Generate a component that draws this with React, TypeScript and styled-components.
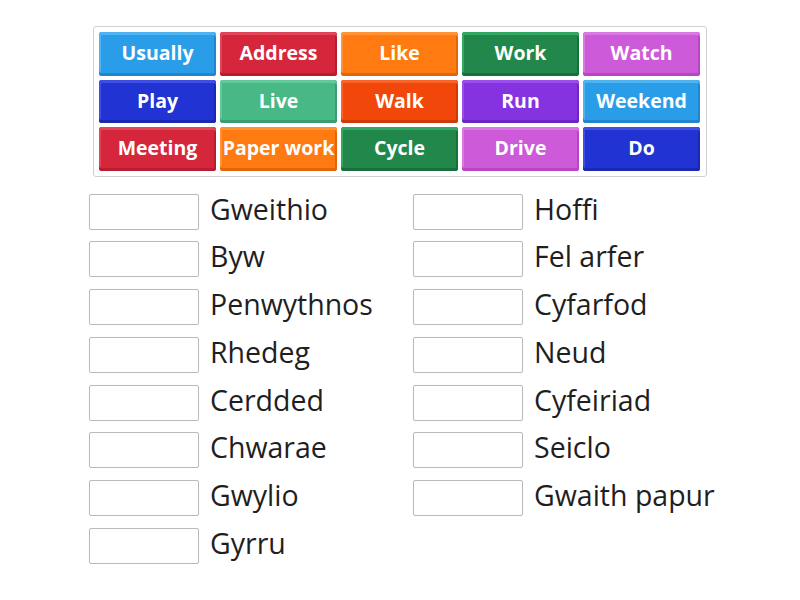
import React from "react";
import styled, { createGlobalStyle } from "styled-components";

const GlobalStyle = createGlobalStyle`
  html, body {
    margin: 0;
    padding: 0;
    background: #fff;
    font-family: "Open Sans", "Liberation Sans", sans-serif;
  }
`;

const Page = styled.div`
  width: 800px;
  height: 600px;
  padding-top: 26px;
  box-sizing: border-box;
`;

const Tray = styled.div`
  width: 614px;
  margin: 0 auto;
  box-sizing: border-box;
  border: 1px solid #cfcfcf;
  border-radius: 3px;
  padding: 5px 6px 5px 5px;
  display: grid;
  grid-template-columns: repeat(5, 117px);
  grid-auto-rows: 43.5px;
  column-gap: 4px;
  row-gap: 4px;
`;

const Tile = styled.div<{ $c: string; $light: string; $dark: string }>`
  border-radius: 3px;
  background: ${(p) => p.$c};
  box-shadow: inset 0 3px 0 ${(p) => p.$light}, inset 0 -3px 0 ${(p) => p.$dark},
    inset 2px 0 0 ${(p) => p.$light}, inset -2px 0 0 ${(p) => p.$dark};
  color: #fff;
  font-weight: 700;
  font-size: 19.5px;
  padding-bottom: 2px;
  box-sizing: border-box;
  display: flex;
  align-items: center;
  justify-content: center;
  white-space: nowrap;
`;

const Lists = styled.div`
  display: flex;
  padding-left: 89px;
  margin-top: 17px;
`;

const Column = styled.div`
  width: 324px;
  display: flex;
  flex-direction: column;
  gap: 11.8px;
`;

const Row = styled.div`
  display: flex;
  align-items: center;
  gap: 11px;
  height: 36px;
`;

const Box = styled.div`
  width: 108px;
  height: 34px;
  border: 1px solid #b9b9b9;
  border-radius: 2px;
  background: #fff;
  flex-shrink: 0;
`;

const Word = styled.span`
  font-size: 28.5px;
  color: #1f1f1f;
  line-height: 36px;
  margin-top: -6px;
  white-space: nowrap;
`;

type C = [string, string, string];
const blue: C = ["#2a9de9", "#4fb3f2", "#1f86cf"];
const red: C = ["#d5263b", "#e14658", "#b71d30"];
const orange: C = ["#ff7a10", "#ff9335", "#e2650a"];
const green: C = ["#21874b", "#33a862", "#196f3c"];
const pink: C = ["#cd5bd9", "#da79e3", "#b746c4"];
const navy: C = ["#2233d3", "#3f4fe3", "#1a28b2"];
const mint: C = ["#48b886", "#62c99a", "#389d70"];
const flame: C = ["#f2470a", "#fb6428", "#cf3a06"];
const purple: C = ["#8532e0", "#9a4eec", "#6f24c4"];

const tiles: [string, C][] = [
  ["Usually", blue],
  ["Address", red],
  ["Like", orange],
  ["Work", green],
  ["Watch", pink],
  ["Play", navy],
  ["Live", mint],
  ["Walk", flame],
  ["Run", purple],
  ["Weekend", blue],
  ["Meeting", red],
  ["Paper work", orange],
  ["Cycle", green],
  ["Drive", pink],
  ["Do", navy],
];

const left = ["Gweithio", "Byw", "Penwythnos", "Rhedeg", "Cerdded", "Chwarae", "Gwylio", "Gyrru"];
const right = ["Hoffi", "Fel arfer", "Cyfarfod", "Neud", "Cyfeiriad", "Seiclo", "Gwaith papur"];

export default function App() {
  return (
    <Page>
      <GlobalStyle />
      <Tray>
        {tiles.map(([t, c]) => (
          <Tile key={t} $c={c[0]} $light={c[1]} $dark={c[2]}>
            {t}
          </Tile>
        ))}
      </Tray>
      <Lists>
        <Column>
          {left.map((w) => (
            <Row key={w}>
              <Box />
              <Word>{w}</Word>
            </Row>
          ))}
        </Column>
        <Column>
          {right.map((w) => (
            <Row key={w}>
              <Box />
              <Word>{w}</Word>
            </Row>
          ))}
        </Column>
      </Lists>
    </Page>
  );
}
